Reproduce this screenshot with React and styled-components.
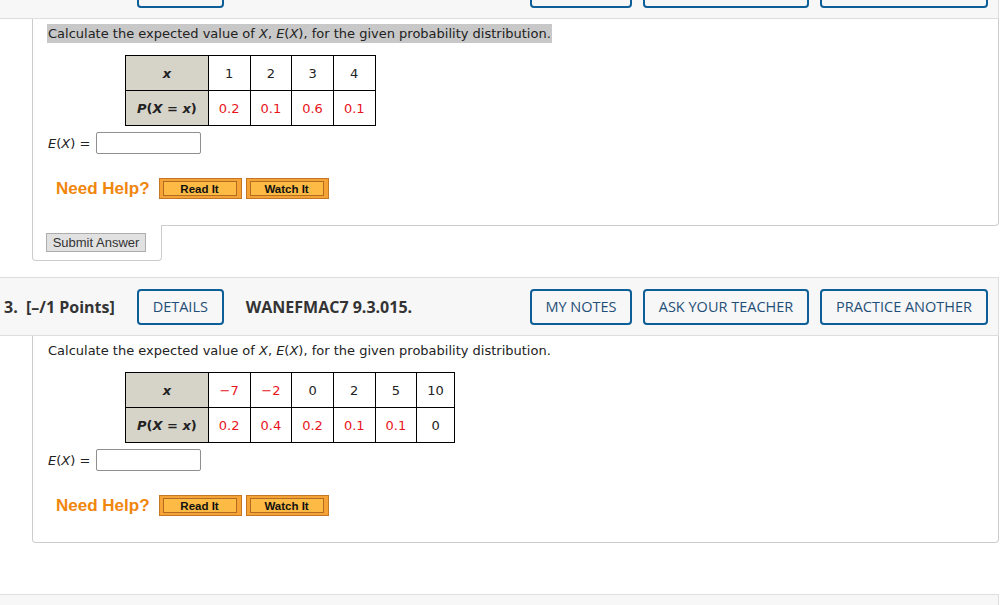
import React from 'react'
import styled, { createGlobalStyle } from 'styled-components'

const GlobalStyle = createGlobalStyle`
  html, body {
    margin: 0;
    padding: 0;
    background: #fff;
    overflow: hidden;
  }
  body {
    font-family: "DejaVu Sans", Verdana, sans-serif;
    font-size: 13px;
    color: #222;
  }
`

const Page = styled.div`
  width: 999px;
  margin-top: -40px;
  display: flex;
  flex-direction: column;
`

const Header = styled.div`
  display: flex;
  align-items: center;
  height: 59px;
  box-sizing: border-box;
  padding: 0 10px 0 4px;
  background: #f7f7f7;
  border: 1px solid #dedede;
  border-left: none;
  font-family: "Open Sans", "Noto Sans", sans-serif;
  color: #333;
  margin-top: ${p => p.$gap || 0}px;
`

const Points = styled.span`
  font-size: 16px;
  font-weight: 700;
  margin-right: 22px;
  white-space: pre;
`

const Code = styled.span`
  font-size: 16px;
  font-weight: 700;
  margin-left: 22px;
`

const Actions = styled.div`
  margin-left: auto;
  display: flex;
  gap: 11px;
`

const OutlineButton = styled.button`
  width: ${p => p.$w}px;
  height: 36px;
  box-sizing: border-box;
  padding: 0;
  border: 2px solid #0e5f97;
  border-radius: 4px;
  background: transparent;
  color: #1f4f78;
  font-family: "Open Sans", "Noto Sans", sans-serif;
  font-size: 14.5px;
  cursor: pointer;
`

const Body = styled.div`
  margin-left: 32px;
  border: 1px solid #cccccc;
  border-top: none;
  background: #fff;
  padding: 5px 15px 26px 15px;
  border-radius: ${p => (p.$tabbed ? '0 0 4px 0' : '0 0 4px 4px')};
`

const Prompt = styled.div`
  line-height: 19px;
  span {
    background: ${p => (p.$selected ? '#c8c8c8' : 'transparent')};
    padding: 0 1px;
    margin-left: -1px;
    display: inline-block;
  }
`

const Table = styled.table`
  border-collapse: collapse;
  margin: 12px 0 0 77px;
  td {
    border: 1px solid #000;
    height: 34px;
    padding: 0 10px;
    text-align: center;
    white-space: nowrap;
  }
`

const LabelCell = styled.td`
  background: #d6d3c9;
  font-weight: 700;
  padding: 0 11px !important;
`

const Cell = styled.td`
  color: ${p => (p.$red ? '#e8141c' : '#222')};
`

const AnswerRow = styled.div`
  display: flex;
  align-items: center;
  margin-top: 6px;
  gap: 6px;
`

const AnswerInput = styled.input`
  width: 105px;
  height: 22px;
  box-sizing: border-box;
  border: 1px solid #8f8f8f;
  border-radius: 2px;
  outline: none;
`

const HelpRow = styled.div`
  display: flex;
  align-items: center;
  margin: 24px 0 0 8px;
  height: 21px;
`

const HelpLabel = styled.span`
  font-family: "Liberation Sans", Arial, sans-serif;
  font-weight: 700;
  font-size: 17px;
  color: #f0860d;
  margin-right: 9px;
`

const HelpButton = styled.button`
  width: 83px;
  height: 21px;
  box-sizing: border-box;
  padding: 2px 4px 2px 3px;
  margin-right: 4px;
  border: 1px solid #c47826;
  background: #f5a236;
  display: flex;
  cursor: pointer;
  span {
    flex: 1;
    display: flex;
    align-items: center;
    justify-content: center;
    border: 1px solid #b36d23;
    background: #fdbb45;
    font-family: "Liberation Sans", Arial, sans-serif;
    font-weight: 700;
    font-size: 11.5px;
    color: #111;
  }
`

const SubmitTab = styled.div`
  margin: -1px 0 0 32px;
  width: 130px;
  box-sizing: border-box;
  padding: 8px 15px 8px 13px;
  border: 1px solid #cccccc;
  border-top: none;
  border-radius: 0 0 4px 4px;
  background: #fff;
`

const SubmitButton = styled.button`
  width: 100px;
  height: 19px;
  box-sizing: border-box;
  padding: 0;
  border: 1px solid #adadad;
  background: #e1e1e1;
  color: #333;
  font-family: "Liberation Sans", Arial, sans-serif;
  font-size: 13px;
  display: block;
`

const QuestionHeader = ({ number, code, gap }) => (
  <Header $gap={gap}>
    <Points>{number}.  [–/1 Points]</Points>
    <OutlineButton $w={87}>DETAILS</OutlineButton>
    <Code>{code}</Code>
    <Actions>
      <OutlineButton $w={102}>MY NOTES</OutlineButton>
      <OutlineButton $w={166}>ASK YOUR TEACHER</OutlineButton>
      <OutlineButton $w={168}>PRACTICE ANOTHER</OutlineButton>
    </Actions>
  </Header>
)

const Question = ({ values, probs, selected, tabbed }) => (
  <Body $tabbed={tabbed}>
    <Prompt $selected={selected}>
      <span>
        Calculate the expected value of <i>X</i>, <i>E</i>(<i>X</i>), for the given probability distribution.
      </span>
    </Prompt>
    <Table>
      <tbody>
        <tr>
          <LabelCell><i>x</i></LabelCell>
          {values.map((v, i) => (
            <Cell key={i} $red={v.startsWith('−')}>{v}</Cell>
          ))}
        </tr>
        <tr>
          <LabelCell><i>P</i>(<i>X</i> = <i>x</i>)</LabelCell>
          {probs.map((v, i) => (
            <Cell key={i} $red={v !== '0'}>{v}</Cell>
          ))}
        </tr>
      </tbody>
    </Table>
    <AnswerRow>
      <span><i>E</i>(<i>X</i>) =</span>
      <AnswerInput type="text" />
    </AnswerRow>
    <HelpRow>
      <HelpLabel>Need Help?</HelpLabel>
      <HelpButton><span>Read It</span></HelpButton>
      <HelpButton><span>Watch It</span></HelpButton>
    </HelpRow>
  </Body>
)

export default function App() {
  return (
    <>
      <GlobalStyle />
      <Page>
        <QuestionHeader number={2} code="WANEFMAC7 9.3.013." />
        <Question
          values={['1', '2', '3', '4']}
          probs={['0.2', '0.1', '0.6', '0.1']}
          selected
          tabbed
        />
        <SubmitTab>
          <SubmitButton>Submit Answer</SubmitButton>
        </SubmitTab>
        <QuestionHeader number={3} code="WANEFMAC7 9.3.015." gap={16} />
        <Question
          values={['−7', '−2', '0', '2', '5', '10']}
          probs={['0.2', '0.4', '0.2', '0.1', '0.1', '0']}
        />
        <Header $gap={51} />
      </Page>
    </>
  )
}
